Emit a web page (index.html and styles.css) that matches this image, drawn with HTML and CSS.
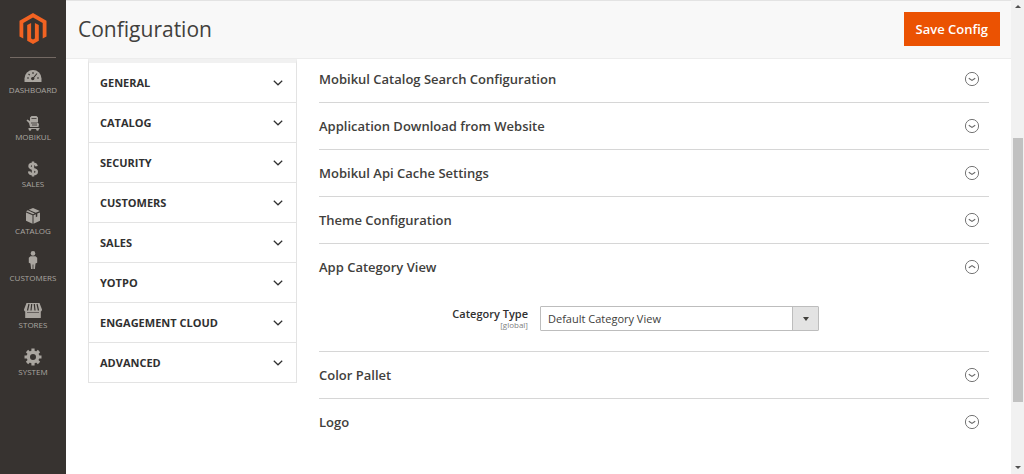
FILE: index.html
```html
<!DOCTYPE html>
<html lang="en">
<head>
    <meta charset="UTF-8">
    <title>Configuration</title>
    <link rel="stylesheet" href="styles.css">
</head>
<body>
    <svg class="symbols" aria-hidden="true">
        <symbol id="chevron" viewBox="0 0 10 6">
            <path d="M.8 .8L5 4.800 9.200 .8" fill="none" stroke="currentColor" stroke-width="1.200"/>
        </symbol>
        <symbol id="toggle" viewBox="0 0 16 16">
            <circle cx="8" cy="8" r="6.600" fill="none" stroke="currentColor" stroke-width=".9"/>
            <path d="M4.800 7.200L8 9.400l3.200-2.200" fill="none" stroke="currentColor" stroke-width="1.100"/>
        </symbol>
    </svg>
    <div class="page">
        <nav class="menu">
            <a class="logo" href="#" aria-label="Magento">
                <svg width="28" height="32" viewBox="0 0 28 32">
                    <path fill="#f26322" d="M14 0L.5 7.800v15.600l3.800 2.200V10L14 4.400 23.700 10v15.600l3.800-2.200V7.800z"/>
                    <path fill="#f26322" d="M15.900 25.500L14 26.600l-1.900-1.100V9.900l-3.900 2.200v15.600L14 31l5.800-3.300V12.100l-3.900-2.200z"/>
                </svg>
            </a>
            <ul>
                <li><a href="#">
                    <svg viewBox="0 0 18 18"><path fill="currentColor" d="M.5 16v-3.500a8.500 8.500 0 0 1 17 0V16z"/><path d="M3 12h2M4.500 8l1.300 1.200M9 6v2M15 12h-2M8.500 13l4.500-5.500" stroke="#373330" stroke-width="1.100"/><circle cx="8.700" cy="12.600" r="1.700" fill="#373330"/></svg>
                    Dashboard</a></li>
                <li><a href="#">
                    <svg viewBox="0 -1 18 18"><path fill="currentColor" d="M6 3.500L7.500 2h5L14 3.500V8h-1l2 2-.5 3H6L5 9 2.500 6.500 3.300 5.500 6 7z"/><path d="M7.500 4.500h5M7 9h6M8 11h5" stroke="#373330" stroke-width=".8"/><path d="M4.500 14.500h11" stroke="currentColor"/><circle cx="6" cy="15.500" r="1.300" fill="currentColor"/><circle cx="13.500" cy="15.500" r="1.300" fill="currentColor"/></svg>
                    Mobikul</a></li>
                <li><a href="#">
                    <svg viewBox="0 0 18 18"><path d="M12.600 6.200C12.300 4.500 10.900 3.800 9 3.800c-2 0-3.500.9-3.500 2.500 0 3.700 7.300 1.700 7.300 5.400 0 1.600-1.600 2.600-3.700 2.600-2.300 0-3.900-1-4-2.900M9 1.500v15" fill="none" stroke="currentColor" stroke-width="2.400"/></svg>
                    Sales</a></li>
                <li><a href="#">
                    <svg viewBox="0 0 18 18"><path fill="currentColor" d="M9 1L4.800 2.800l6.900 3 4.200-1.700zM3.800 3.200L2 4.200l7 3.100 1.700-.9zM2 5.400v8.400l6.500 3V8.300zM9.500 8.300v8.500l6.500-3V5.400l-2.700 1.200v3l-1.500.7v-3z"/></svg>
                    Catalog</a></li>
                <li><a href="#">
                    <svg viewBox="0 3 18 18"><circle cx="9" cy="2.400" r="2.300" fill="currentColor"/><path fill="currentColor" d="M6.500 5.200h5l1.700 1.600v5l-1.700.6-.6 5.600H9.400v-4.500h-.8V18H7.100l-.6-5.600-1.700-.6v-5z"/></svg>
                    Customers</a></li>
                <li><a href="#">
                    <svg viewBox="0 0 18 18"><path fill="currentColor" d="M2.500 2h13L18 8.500c0 1.200-.5 1.800-1.200 2V17H1.200v-6.500C.5 10.300 0 9.700 0 8.500z"/><path d="M5 3L3.500 9.500M7.700 3L7 9.500M10.300 3l.7 6.500M13 3l1.500 6.500" stroke="#373330" stroke-width="1.200"/><path d="M3 11.500h12" stroke="#373330" stroke-width=".6"/></svg>
                    Stores</a></li>
                <li><a href="#">
                    <svg viewBox="0 0 18 18"><circle cx="9" cy="9" r="4.700" fill="none" stroke="currentColor" stroke-width="3.400"/><path d="M9 .5v3M9 14.500v3M.5 9h3M14.500 9h3M3 3l2 2M13 13l2 2M3 15l2-2M13 5l2-2" stroke="currentColor" stroke-width="3.200"/></svg>
                    System</a></li>
            </ul>
        </nav>
        <div class="main">
            <header class="header">
                <h1>Configuration</h1>
                <button type="button" class="save">Save Config</button>
            </header>
            <main class="content">
                <ul class="tabs">
                    <li><button type="button">General<svg><use href="#chevron"/></svg></button></li>
                    <li><button type="button">Catalog<svg><use href="#chevron"/></svg></button></li>
                    <li><button type="button">Security<svg><use href="#chevron"/></svg></button></li>
                    <li><button type="button">Customers<svg><use href="#chevron"/></svg></button></li>
                    <li><button type="button">Sales<svg><use href="#chevron"/></svg></button></li>
                    <li><button type="button">Yotpo<svg><use href="#chevron"/></svg></button></li>
                    <li><button type="button">Engagement Cloud<svg><use href="#chevron"/></svg></button></li>
                    <li><button type="button">Advanced<svg><use href="#chevron"/></svg></button></li>
                </ul>
                <div class="sections">
                    <section>
                        <h2><button type="button">Mobikul Catalog Search Configuration<svg><use href="#toggle"/></svg></button></h2>
                    </section>
                    <section>
                        <h2><button type="button">Application Download from Website<svg><use href="#toggle"/></svg></button></h2>
                    </section>
                    <section>
                        <h2><button type="button">Mobikul Api Cache Settings<svg><use href="#toggle"/></svg></button></h2>
                    </section>
                    <section>
                        <h2><button type="button">Theme Configuration<svg><use href="#toggle"/></svg></button></h2>
                    </section>
                    <section class="open">
                        <h2><button type="button" aria-expanded="true">App Category View<svg><use href="#toggle"/></svg></button></h2>
                        <div class="field">
                            <label for="category-type">Category Type <span>[global]</span></label>
                            <div class="select">
                                <select id="category-type">
                                    <option>Default Category View</option>
                                </select>
                            </div>
                        </div>
                    </section>
                    <section>
                        <h2><button type="button">Color Pallet<svg><use href="#toggle"/></svg></button></h2>
                    </section>
                    <section>
                        <h2><button type="button">Logo<svg><use href="#toggle"/></svg></button></h2>
                    </section>
                </div>
            </main>
        </div>
        <div class="scrollbar" aria-hidden="true">
            <svg viewBox="0 0 8 4"><path d="M0 4l4-4 4 4z"/></svg>
            <div class="track"><div class="thumb"></div></div>
            <svg viewBox="0 0 8 4"><path d="M0 0l4 4 4-4z"/></svg>
        </div>
    </div>
</body>
</html>
```

FILE: styles.css
```css
* {
    margin: 0;
    padding: 0;
    box-sizing: border-box;
    list-style: none;
}
body {
    background: #fff;
    color: #41403c;
    font-family: "Open Sans", "Noto Sans", sans-serif;
}
button,
select {
    font: inherit;
    color: inherit;
    border: 0;
    background: none;
}
a {
    color: inherit;
    text-decoration: none;
}
.symbols {
    display: none;
}
.page {
    display: flex;
    min-height: 100vh;
}

/* left menu */
.menu {
    flex: 0 0 66px;
    background: #373330;
    color: #aaa6a0;
}
.logo {
    display: flex;
    justify-content: center;
    height: 58px;
    margin: 0 10px 8px;
    padding-top: 13px;
    border-bottom: 1px solid #736963;
}
.menu li a {
    display: flex;
    flex-direction: column;
    align-items: center;
    height: 47px;
    font-size: 8px;
    line-height: 11px;
    text-transform: uppercase;
}
.menu li svg {
    width: 18px;
    height: 18px;
    overflow: visible;
}

/* title bar */
.main {
    flex: 1;
    min-width: 0;
}
.header {
    display: flex;
    align-items: center;
    justify-content: space-between;
    height: 59px;
    padding: 0 11px 2px 12px;
    background: #f8f8f8;
    border-top: 1px solid #e3e3e3;
    border-bottom: 1px solid #ececec;
}
.header h1 {
    font-size: 21px;
    font-weight: 400;
    line-height: 30px;
}
.save {
    height: 34px;
    padding: 0 12px;
    background: #eb5202;
    color: #fff;
    font-size: 13px;
    font-weight: 600;
}

.content {
    display: flex;
    align-items: flex-start;
    gap: 22px;
    padding: 0 22px;
}

/* config tabs */
.tabs {
    flex: 0 0 209px;
    border: 1px solid #e3e3e3;
    border-top: 4px solid #f1f1f1;
    border-bottom: 0;
}
.tabs button {
    display: flex;
    align-items: center;
    justify-content: space-between;
    width: 100%;
    height: 40px;
    padding: 0 13px 0 11px;
    border-bottom: 1px solid #e3e3e3;
    font-size: 11px;
    font-weight: 700;
    text-transform: uppercase;
    color: #303030;
}
.tabs svg {
    width: 10px;
    height: 6px;
}

/* config sections */
.sections {
    flex: 1;
    min-width: 0;
}
.sections section {
    border-bottom: 1px solid #d6d6d6;
}
.sections section:last-child {
    border-bottom: 0;
}
.sections h2 button {
    display: flex;
    align-items: center;
    justify-content: space-between;
    width: 100%;
    height: 46px;
    padding-right: 9px;
    font-size: 13px;
    font-weight: 600;
    text-align: left;
}
.sections section:first-child button {
    height: 43px;
    padding-bottom: 3px;
}
.sections h2 svg {
    width: 16px;
    height: 16px;
    color: #666;
}
.open h2 svg {
    transform: rotate(180deg);
}
.field {
    display: grid;
    grid-template-columns: 209px minmax(0, 279px);
    gap: 12px;
    padding: 16px 0 20px;
}
.field label {
    padding-top: 1px;
    font-size: 11px;
    font-weight: 600;
    line-height: 14px;
    text-align: right;
    color: #303030;
}
.field label span {
    display: block;
    font-size: 8px;
    font-weight: 400;
    line-height: 8px;
    color: #808080;
}
.select {
    position: relative;
}
.select select {
    width: 100%;
    height: 25px;
    padding: 0 32px 0 7px;
    border: 1px solid #bdbdbd;
    border-radius: 1px;
    appearance: none;
    background: linear-gradient(to left, #e3e3e3 25px, #bdbdbd 25px, #bdbdbd 26px, #fff 26px);
    font-size: 11px;
    color: #41403c;
}
.select::after {
    content: "";
    position: absolute;
    top: 11px;
    right: 10px;
    border: 3px solid transparent;
    border-top: 4px solid #41403c;
    border-bottom: 0;
    pointer-events: none;
}

/* window scrollbar */
.scrollbar {
    display: flex;
    flex: 0 0 13px;
    flex-direction: column;
    align-items: center;
    padding: 5px 0;
    background: #f1f1f1;
}
.scrollbar svg {
    width: 6px;
    height: 3px;
    fill: #505050;
}
.track {
    display: flex;
    flex: 1;
    flex-direction: column;
    justify-content: flex-end;
    width: 10px;
    padding-bottom: 64px;
}
.thumb {
    height: 67%;
    background: #c1c1c1;
}
```
